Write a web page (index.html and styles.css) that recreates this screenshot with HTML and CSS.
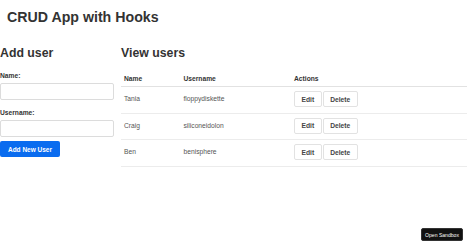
FILE: index.html
```html
<!DOCTYPE html>
<html lang="en">
<head>
<meta charset="utf-8">
<title>CRUD App with Hooks</title>
<link rel="stylesheet" href="styles.css">
</head>
<body>
<div class="container">
  <h1 class="title">CRUD App with Hooks</h1>
  <div class="flex-row">
    <div class="col-add">
      <h2 class="heading">Add user</h2>
      <form class="user-form">
        <label class="field-label">Name:</label>
        <input class="field-input" type="text" name="name">
        <label class="field-label">Username:</label>
        <input class="field-input" type="text" name="username">
        <button class="btn-primary" type="button">Add New User</button>
      </form>
    </div>
    <div class="col-view">
      <h2 class="heading">View users</h2>
      <table class="users">
        <thead>
          <tr>
            <th class="c-name">Name</th>
            <th class="c-user">Username</th>
            <th class="c-act">Actions</th>
          </tr>
        </thead>
        <tbody>
          <tr>
            <td>Tania</td>
            <td>floppydiskette</td>
            <td><div class="actions"><button class="btn-muted">Edit</button><button class="btn-muted">Delete</button></div></td>
          </tr>
          <tr>
            <td>Craig</td>
            <td>siliconeidolon</td>
            <td><div class="actions"><button class="btn-muted">Edit</button><button class="btn-muted">Delete</button></div></td>
          </tr>
          <tr>
            <td>Ben</td>
            <td>benisphere</td>
            <td><div class="actions"><button class="btn-muted">Edit</button><button class="btn-muted">Delete</button></div></td>
          </tr>
        </tbody>
      </table>
    </div>
  </div>
</div>
<button class="sandbox">Open Sandbox</button>
</body>
</html>
```

FILE: styles.css
```css
html, body {
  margin: 0;
  padding: 0;
  background: #fff;
}
body {
  font-family: "Liberation Sans", Arial, sans-serif;
  color: #333;
}
.container {
  width: 474px;
}
.title {
  margin: 0;
  padding: 9px 0 0 7px;
  font-size: 14.2px;
  line-height: 16px;
  font-weight: bold;
  color: #333;
}
.flex-row {
  display: grid;
  grid-template-columns: 114px 346px;
  column-gap: 7px;
  margin-top: 21px;
}
.heading {
  margin: 0;
  font-size: 12.3px;
  line-height: 14px;
  font-weight: bold;
  color: #333;
}
.user-form {
  display: flex;
  flex-direction: column;
  align-items: flex-start;
}
.field-label {
  display: block;
  font-size: 6.7px;
  line-height: 8px;
  font-weight: bold;
  color: #333;
  margin-bottom: 3.5px;
}
.user-form .field-label:first-child {
  margin-top: 11.5px;
}
.field-input {
  box-sizing: border-box;
  width: 114px;
  height: 17px;
  margin: 0 0 8.5px 0;
  border: 1px solid #dcdcdc;
  border-radius: 2px;
  background: #fff;
  padding: 0 4px;
}
.user-form .field-input + .field-label + .field-input {
  margin-bottom: 4px;
}
.btn-primary {
  box-sizing: border-box;
  height: 16px;
  width: 60px;
  padding: 0;
  border: none;
  border-radius: 2px;
  background: #0a6cef;
  color: #fff;
  font-family: "Liberation Sans", Arial, sans-serif;
  font-size: 6.5px;
  font-weight: bold;
}
.users {
  width: 346px;
  margin-top: 12px;
  border-collapse: collapse;
  table-layout: fixed;
}
.users th {
  text-align: left;
  font-size: 6.7px;
  line-height: 8px;
  font-weight: bold;
  color: #333;
  padding: 3px 3px 3px;
  border-bottom: 1px solid #e2e2e2;
}
.users td {
  font-size: 6.7px;
  line-height: 8px;
  color: #555;
  padding: 4px 3px 5.5px;
  border-bottom: 1px solid #ececec;
  vertical-align: middle;
}
.c-name { width: 53.5px; }
.c-user { width: 104.5px; }
.actions {
  display: flex;
  gap: 1px;
}
.btn-muted {
  box-sizing: border-box;
  height: 16px;
  padding: 0 6.5px;
  border: 1px solid #e2e2e2;
  border-radius: 2px;
  background: #fff;
  color: #444;
  font-family: "Liberation Sans", Arial, sans-serif;
  font-size: 6.7px;
  font-weight: bold;
}
.sandbox {
  position: fixed;
  right: 11px;
  bottom: 7px;
  height: 13px;
  padding: 0 3px;
  border: 1px solid #333;
  border-radius: 2px;
  background: #111;
  color: #fff;
  font-family: "Liberation Sans", Arial, sans-serif;
  font-size: 5.1px;
}
```
